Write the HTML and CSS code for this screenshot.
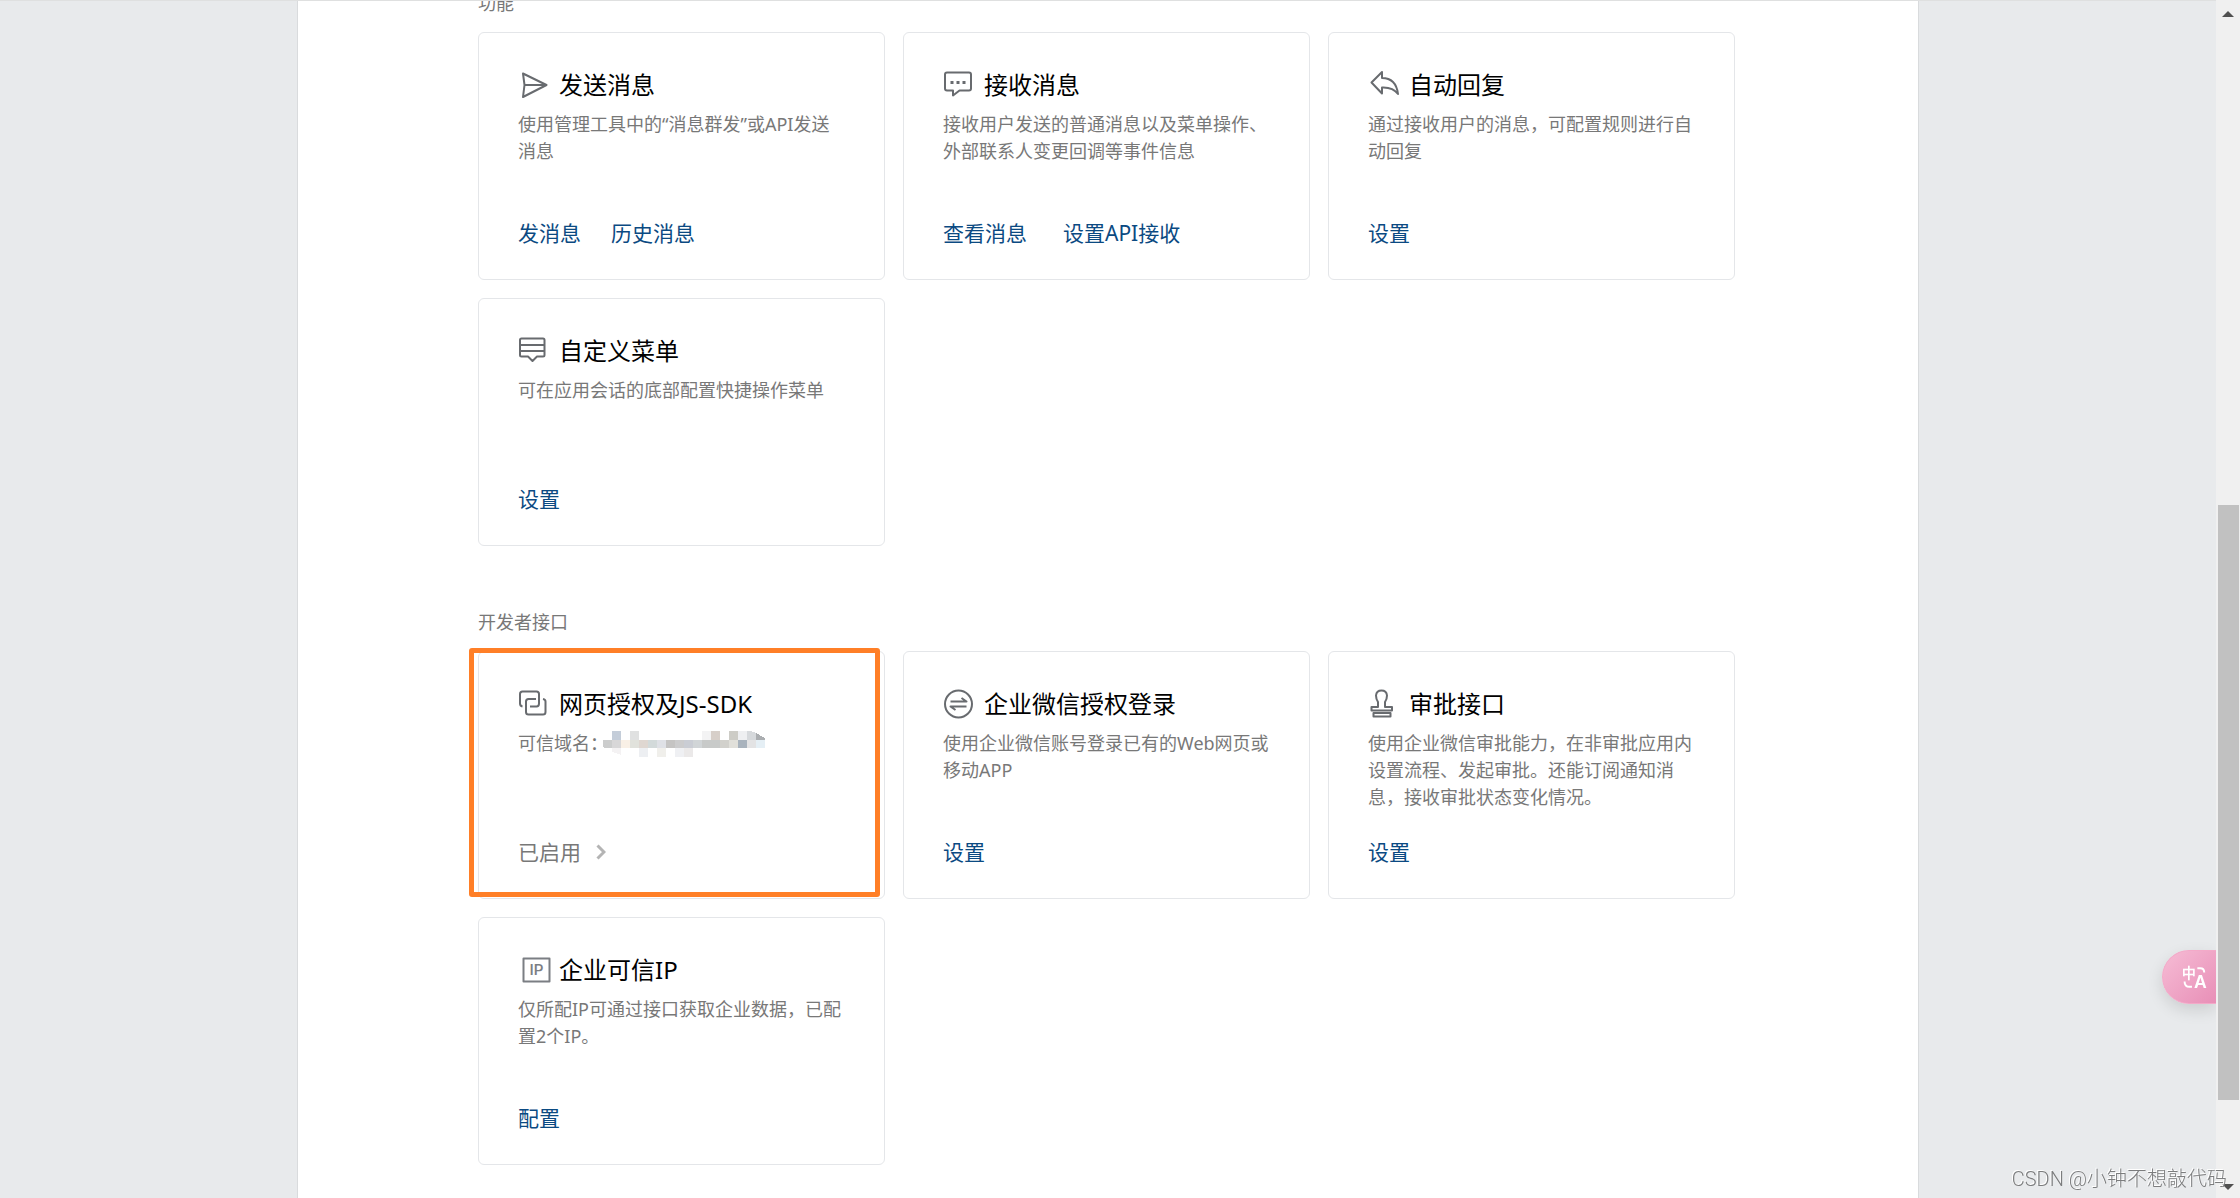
FILE: index.html
```html
<!DOCTYPE html>
<html lang="zh-CN">
<head>
<meta charset="utf-8">
<title>应用管理</title>
<link rel="stylesheet" href="styles.css">
</head>
<body>
<div class="viewport">
  <main class="page">
    <section class="section section-scrolled">
      <h2 class="section-title">功能</h2>
      <div class="cards">
        <article class="card">
          <h3 class="card-title">
            <svg class="icon" viewBox="0 0 30 30"><path d="M5 3.5 28.500 15 5 27 6.500 15ZM6.500 15H28"/></svg>
            发送消息
          </h3>
          <p class="card-desc">使用管理工具中的“消息群发”或API发送消息</p>
          <div class="links"><a href="#">发消息</a><a href="#">历史消息</a></div>
        </article>
        <article class="card">
          <h3 class="card-title">
            <svg class="icon" viewBox="0 0 30 30"><path d="M4 2.500H26Q28 2.500 28 4.500V18.500Q28 20.500 26 20.500H16.500L10 25.500V20.500H4Q2 20.500 2 18.500V4.500Q2 2.500 4 2.500Z"/><path class="solid" d="M7.500 11h3v3h-3zM13.500 11h3v3h-3zM19.500 11h3v3h-3z"/></svg>
            接收消息
          </h3>
          <p class="card-desc">接收用户发送的普通消息以及菜单操作、外部联系人变更回调等事件信息</p>
          <div class="links links-wide"><a href="#">查看消息</a><a href="#">设置API接收</a></div>
        </article>
        <article class="card">
          <h3 class="card-title">
            <svg class="icon" viewBox="0 0 30 30"><path d="M3.500 12.500 14 2V8Q28 8 30 24Q25 17 14 17.500V23.500Z"/></svg>
            自动回复
          </h3>
          <p class="card-desc">通过接收用户的消息，可配置规则进行自动回复</p>
          <div class="links"><a href="#">设置</a></div>
        </article>
        <article class="card">
          <h3 class="card-title">
            <svg class="icon" viewBox="0 0 30 30"><path d="M3.500 2.500H25Q26.500 2.500 26.500 4V19Q26.500 20.500 25 20.500H19L14.500 25 10 20.500H3.500Q2 20.500 2 19V4Q2 2.500 3.500 2.500ZM2 9H26.500M2 15H26.500"/></svg>
            自定义菜单
          </h3>
          <p class="card-desc">可在应用会话的底部配置快捷操作菜单</p>
          <div class="links"><a href="#">设置</a></div>
        </article>
      </div>
    </section>

    <section class="section">
      <h2 class="section-title">开发者接口</h2>
      <div class="cards">
        <article class="card card-marked">
          <h3 class="card-title">
            <svg class="icon" viewBox="0 0 30 30"><path d="M4.500 17.500Q2 17 2 14.500V5Q2 2.500 4.500 2.500H18.500Q21 2.500 21 5V14.500Q21 17.500 18.500 17.500H12M18 10H10.500Q8 10 8 12.500V23Q8 25.500 10.500 25.500H25Q27.500 25.500 27.500 23V12.500Q27.500 10.500 25 10"/></svg>
            网页授权及JS-SDK
          </h3>
          <p class="card-desc">可信域名：<svg class="mosaic" viewBox="0 0 162 27" shape-rendering="crispEdges">
            <path fill="#c4cdd9" d="M9 1h9v9h-9z"/><path fill="#e0e1e1" d="M27 1h9v9h-9z"/><path fill="#f3f3f4" d="M99 1h9v9h-9z"/><path fill="#d7cfc9" d="M108 1h9v9h-9z"/><path fill="#cdccc6" d="M126 1h9v9h-9z"/><path fill="#eeeff1" d="M135 1h9v9h-9z"/><path fill="#d6d9dc" d="M144 1h4l5 2v7h-9z"/><path fill="#abaeb1" d="M153 3l9 5v2h-9z"/>
            <path fill="#cccdcd" d="M0 10h9v8H1L0 15z"/><path fill="#d8d7d8" d="M9 10h9v8h-9z"/><path fill="#f9f0e6" d="M18 10h9v8h-9z"/><path fill="#e1e2dc" d="M27 10h9v8h-9z"/><path fill="#dfd7d1" d="M36 10h9v8h-9z"/><path fill="#d3dada" d="M45 10h9v8h-9z"/><path fill="#dfe1e6" d="M54 10h9v8h-9z"/><path fill="#c5c4c3" d="M63 10h9v8h-9z"/><path fill="#cccccd" d="M72 10h9v8h-9z"/><path fill="#cacdd4" d="M81 10h9v8h-9z"/><path fill="#d1d5d7" d="M90 10h9v8h-9z"/><path fill="#c8cac9" d="M99 10h18v8H99z"/><path fill="#d2d1cc" d="M117 10h9v8h-9z"/><path fill="#e1e0da" d="M126 10h9v8h-9z"/><path fill="#a9b3bd" d="M135 10h9v8h-9z"/><path fill="#e3e3e4" d="M144 10h9v8h-9z"/><path fill="#e5eff5" d="M153 10h9v8h-9z"/>
            <path fill="#f4f2f3" d="M9 18h9v7l-9-3z"/><path fill="#edeff2" d="M36 18h9v9h-9z"/><path fill="#f0efeb" d="M54 18h9v9h-9z"/><path fill="#eff0f3" d="M72 18h9v9h-9z"/><path fill="#ebe9e9" d="M81 18h9v9h-9z"/>
          </svg></p>
          <div class="links"><a class="status" href="#">已启用<svg class="chevron" viewBox="0 0 10 16"><path d="M1.500 1.500 8 8 1.500 14.500"/></svg></a></div>
        </article>
        <article class="card">
          <h3 class="card-title">
            <svg class="icon" viewBox="0 0 30 30"><circle cx="15.500" cy="15" r="13.500"/><path d="M7.500 12.500H23.500L18.500 9M23.500 17.500H7.500L12.500 21"/></svg>
            企业微信授权登录
          </h3>
          <p class="card-desc">使用企业微信账号登录已有的Web网页或移动APP</p>
          <div class="links"><a href="#">设置</a></div>
        </article>
        <article class="card">
          <h3 class="card-title">
            <svg class="icon" viewBox="0 0 30 30"><path d="M3.500 18H10V13Q8 10 8 6.500Q8.500 1.500 13.500 1.500T19 6.500Q19 10 17 13V18H24V21.500H3.500ZM5.500 24H22.500V27.500H5.500Z"/></svg>
            审批接口
          </h3>
          <p class="card-desc">使用企业微信审批能力，在非审批应用内设置流程、发起审批。还能订阅通知消息，接收审批状态变化情况。</p>
          <div class="links"><a href="#">设置</a></div>
        </article>
        <article class="card">
          <h3 class="card-title">
            <svg class="icon icon-ip" viewBox="0 0 30 30"><path d="M5.500 3.500H31.500V26.500H5.500Z"/><text x="18.500" y="20" text-anchor="middle">IP</text></svg>
            企业可信IP
          </h3>
          <p class="card-desc">仅所配IP可通过接口获取企业数据，已配置2个IP。</p>
          <div class="links"><a href="#">配置</a></div>
        </article>
      </div>
    </section>
  </main>
</div>

<div class="scrollbar">
  <svg class="arrow" viewBox="0 0 12 6"><path d="M6 0 12 6H0Z"/></svg>
  <div class="track"><div class="thumb"></div></div>
  <svg class="arrow" viewBox="0 0 12 6"><path d="M0 0H12L6 6Z"/></svg>
</div>

<button class="translate" type="button" aria-label="翻译">
  <svg viewBox="0 0 54 54"><text class="zh" x="26" y="27" text-anchor="middle">中</text><text class="en" x="38" y="38" text-anchor="middle">A</text><path d="M35 17.500H38Q42 17.500 42 22M22 31Q22 36.500 27 36.500H29.500"/></svg>
</button>
<div class="watermark">CSDN @小钟不想敲代码</div>
</body>
</html>
```
FILE: styles.css
```css
* { box-sizing: border-box; }

body {
  margin: 0;
  height: 100vh;
  display: grid;
  grid-template-columns: 1fr 24px;
  overflow: hidden;
  background: #e8eaec;
  color: #000;
  font-family: "Noto Sans", "Noto Sans CJK SC", sans-serif;
  font-weight: 400;
}

.viewport {
  min-width: 0;
  height: 100vh;
  overflow: hidden;
  border-top: 1px solid #dfe0e0;
}

.page {
  max-width: 1622px;
  min-height: 100%;
  margin: 0 auto;
  padding: 0 183px 32px 180px;
  border: solid #d9dbdd;
  border-width: 0 1px;
  background: #fff;
  display: flow-root;
}

.section { margin-top: 63px; }
.section-scrolled { margin-top: -11px; }

.section-title {
  margin: 0 0 15px;
  font-size: 18px;
  line-height: 27px;
  font-weight: inherit;
  color: #787878;
}

.cards {
  display: grid;
  grid-template-columns: repeat(3, minmax(0, 1fr));
  gap: 18px;
}

.card {
  position: relative;
  display: flex;
  flex-direction: column;
  min-height: 248px;
  padding: 34px 39px 30px;
  border: 1px solid #e4e6e9;
  border-radius: 6px;
}

.card-marked::after {
  content: "";
  position: absolute;
  inset: -4px 4px 1px -10px;
  border: 5px solid #ff7f27;
  border-radius: 3px;
  pointer-events: none;
}

.card-title {
  display: flex;
  align-items: center;
  gap: 11px;
  margin: 0 0 8px;
  font-size: 24px;
  line-height: 36px;
  font-weight: inherit;
}

.icon {
  flex: none;
  width: 30px;
  height: 30px;
  overflow: visible;
  fill: none;
  stroke: #686b6f;
  stroke-width: 2;
  stroke-linejoin: round;
}
.icon .solid { fill: #686b6f; stroke: none; }
.icon-ip { stroke: #7b7e83; }
.icon-ip text {
  font-family: Roboto, sans-serif;
  font-size: 15px;
  font-weight: 500;
  fill: #7b7e83;
  stroke: none;
}

.card-desc {
  margin: 0;
  font-size: 18px;
  line-height: 27px;
  color: #787878;
}

.mosaic {
  width: 162px;
  height: 27px;
  margin-left: -5px;
  vertical-align: top;
}

.links {
  display: flex;
  gap: 30px;
  margin-top: auto;
  font-size: 21px;
  line-height: 32px;
}
.links-wide { gap: 36px; }
.links a { color: #0b4a82; text-decoration: none; }
.links .status {
  display: flex;
  align-items: center;
  gap: 15px;
  color: #787878;
}

.chevron {
  width: 10px;
  height: 16px;
  fill: none;
  stroke: #b4b4b4;
  stroke-width: 3;
}

.scrollbar {
  display: flex;
  flex-direction: column;
  align-items: center;
  gap: 8px;
  height: 100vh;
  padding: 11px 0 8px;
  background: #f0f0f0;
}
.arrow { width: 12px; height: 6px; fill: #505050; }
.track {
  flex: 1;
  align-self: stretch;
  display: flex;
  padding: 480px 1px 76px 2px;
}
.thumb { flex: 1; background: #c1c1c1; }

.translate {
  position: fixed;
  right: 24px;
  bottom: 194px;
  width: 54px;
  height: 54px;
  padding: 0;
  border: 1px solid #f3a9c8;
  border-right: 0;
  border-radius: 27px 0 0 27px;
  background: linear-gradient(135deg, #f6bcd5, #e88fb7);
  box-shadow: 0 6px 16px rgba(0, 0, 0, 0.12);
  clip-path: inset(-30px 0 -30px -30px);
}
.translate svg { display: block; fill: none; stroke: #fff; stroke-width: 2; }
.translate text { fill: #fff; stroke: none; font-weight: 700; }
.translate .zh { font-size: 14px; }
.translate .en { font-size: 18px; }

.watermark {
  position: fixed;
  right: 13px;
  bottom: 4px;
  font-family: Roboto, "Noto Sans CJK SC", sans-serif;
  font-size: 20px;
  line-height: 30px;
  font-weight: 300;
  color: #7c7d7e;
  text-shadow: -1px -1px #fff;
}
```
